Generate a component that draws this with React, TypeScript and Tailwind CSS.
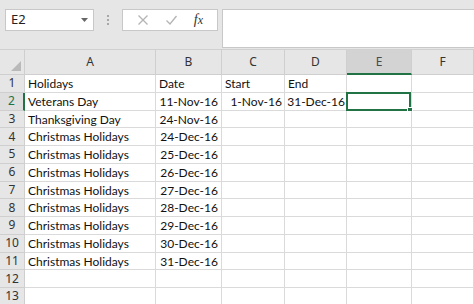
const cols = ['A', 'B', 'C', 'D', 'E', 'F'];

type Row = { a?: string; b?: string; c?: string; d?: string; bRight?: boolean };

const rows: Row[] = [
  { a: 'Holidays', b: 'Date', c: 'Start', d: 'End' },
  { a: 'Veterans Day', b: '11-Nov-16', c: '1-Nov-16', d: '31-Dec-16', bRight: true },
  { a: 'Thanksgiving Day', b: '24-Nov-16', bRight: true },
  { a: 'Christmas Holidays', b: '24-Dec-16', bRight: true },
  { a: 'Christmas Holidays', b: '25-Dec-16', bRight: true },
  { a: 'Christmas Holidays', b: '26-Dec-16', bRight: true },
  { a: 'Christmas Holidays', b: '27-Dec-16', bRight: true },
  { a: 'Christmas Holidays', b: '28-Dec-16', bRight: true },
  { a: 'Christmas Holidays', b: '29-Dec-16', bRight: true },
  { a: 'Christmas Holidays', b: '30-Dec-16', bRight: true },
  { a: 'Christmas Holidays', b: '31-Dec-16', bRight: true },
  {},
  {},
];

const cell = 'h-[17.75px] border-r border-b border-[#dadada] bg-white text-[12px] leading-[18px] text-[#111] whitespace-nowrap overflow-visible';

export default function App() {
  return (
    <div className="w-[474px] h-[304px] overflow-hidden bg-[#e6e6e6] font-['Lato',sans-serif]">
      {/* Formula bar */}
      <div className="flex items-start h-[50px] pt-[9px] border-b border-[#d0d0d0]">
        <div className="ml-[5px] w-[89px] h-[22px] bg-white border border-[#c8c8c8] flex items-center justify-between pl-[5px] pr-[5px]">
          <span className="text-[13px] text-[#222] font-['Noto_Sans',sans-serif]">E2</span>
          <svg width="7" height="4" viewBox="0 0 7 4"><path d="M0 0h7L3.5 4z" fill="#666" /></svg>
        </div>
        <div className="w-[28px] h-[22px] flex flex-col items-center justify-center gap-[2px]">
          <span className="w-[2px] h-[2px] bg-[#a8a8a8]" />
          <span className="w-[2px] h-[2px] bg-[#a8a8a8]" />
          <span className="w-[2px] h-[2px] bg-[#a8a8a8]" />
        </div>
        <div className="w-[96px] h-[22px] bg-white border border-[#c8c8c8] flex items-center justify-around px-[6px]">
          <svg width="12" height="12" viewBox="0 0 12 12"><path d="M1.5 1.5l9 9M10.5 1.5l-9 9" stroke="#b4b4b4" strokeWidth="1.3" /></svg>
          <svg width="13" height="12" viewBox="0 0 13 12"><path d="M1.5 6.5l3.5 3.5 6.5-8" stroke="#b4b4b4" strokeWidth="1.3" fill="none" /></svg>
          <span className="text-[14px] italic text-[#333] font-['Liberation_Serif',serif] leading-none">f<span className="text-[12px]">x</span></span>
        </div>
        <div className="ml-[4px] flex-1 h-[39px] bg-white border-l border-t border-b border-[#c8c8c8]" />
      </div>

      {/* Grid */}
      <div className="grid grid-cols-[25px_131px_66px_63px_62px_65px_1fr] font-['Noto_Sans',sans-serif]">
        {/* corner */}
        <div className="relative h-[25px] bg-[#e6e6e6] border-r border-b border-[#cfcfcf]">
          <svg className="absolute right-[3px] bottom-[3px]" width="10" height="10" viewBox="0 0 10 10"><path d="M10 0v10H0z" fill="#b9b9b9" /></svg>
        </div>
        {cols.map((c) =>
          c === 'E' ? (
            <div key={c} className="h-[25px] bg-[#d3d3d3] border-r border-b-2 border-r-[#cfcfcf] border-b-[#217346] flex items-center justify-center text-[12px] text-[#4a4a4a]">
              {c}
            </div>
          ) : (
            <div key={c} className="h-[25px] bg-[#e6e6e6] border-r border-b border-[#cfcfcf] flex items-center justify-center text-[12px] text-[#333]">
              {c}
            </div>
          )
        )}

        {rows.map((r, i) => (
          <Row key={i} n={i + 1} r={r} />
        ))}
      </div>
    </div>
  );
}

function Row({ n, r }: { n: number; r: Row }) {
  const sel = n === 2;
  return (
    <>
      <div
        className={
          sel
            ? 'h-[17.75px] bg-[#dedede] border-r-2 border-b border-r-[#217346] border-b-[#cfcfcf] flex items-center justify-center text-[12px] text-[#217346]'
            : 'h-[17.75px] bg-[#e6e6e6] border-r border-b border-[#cfcfcf] flex items-center justify-center text-[12px] text-[#333]'
        }
      >
        {n}
      </div>
      <div className={cell + " pl-[3px] font-['Lato',sans-serif]"}>{r.a}</div>
      <div className={cell + (r.bRight ? ' text-right pr-[3px]' : ' pl-[3px]') + " font-['Lato',sans-serif]"}>{r.b}</div>
      <div className={cell + (n === 2 ? ' text-right pr-[2px]' : ' pl-[3px]') + " font-['Lato',sans-serif]"}>{r.c}</div>
      <div className={cell + (n === 2 ? ' text-right pr-[1px]' : ' pl-[3px]') + " font-['Lato',sans-serif]"}>{r.d}</div>
      <div className={cell + ' relative'}>
        {sel && (
          <div className="absolute -left-[1px] -top-[1px] -right-[0px] -bottom-[1px] border-2 border-[#217346]">
            <span className="absolute -right-[4px] -bottom-[4px] w-[6px] h-[6px] bg-[#217346] border border-white" />
          </div>
        )}
      </div>
      <div className={cell} />
    </>
  );
}
